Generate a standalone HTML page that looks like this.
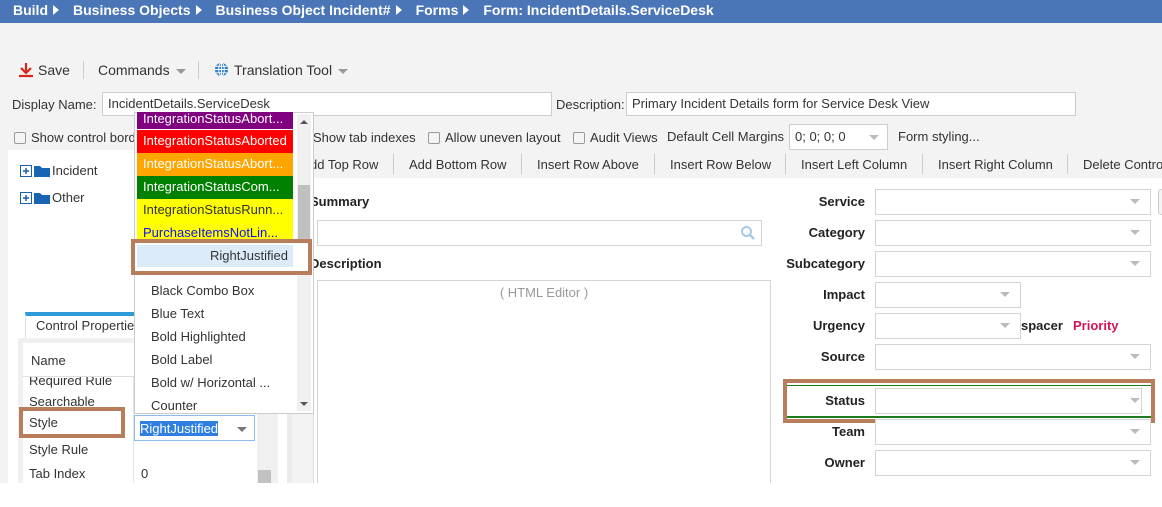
<!DOCTYPE html>
<html><head><meta charset="utf-8"><style>
*{box-sizing:border-box;margin:0;padding:0}
body{width:1162px;height:507px;overflow:hidden;background:#fff;font-family:"Liberation Sans",Arial,sans-serif;font-size:13px;color:#333;position:relative}
.a{position:absolute;white-space:nowrap}
.top{left:0;top:0;width:1162px;height:23px;background:#4a76b8;color:#fff;font-weight:bold;font-size:14px;line-height:21px;padding-left:13px}
.top span{margin-right:14px}
.tri{display:inline-block;width:0;height:0;border-left:6px solid #fff;border-top:5px solid transparent;border-bottom:5px solid transparent;margin-left:5px}
.inp{background:#fff;border:1px solid #ccc;height:24px;line-height:22px;padding-left:5px}
.cb{display:inline-block;width:12px;height:12px;border:1px solid #999;border-radius:2px;background:#f4f4f4;vertical-align:-2px;margin-right:5px}
.sep{width:1px;height:18px;background:#ccc}
.dd{width:0;height:0;border-top:5px solid #bbb;border-left:5px solid transparent;border-right:5px solid transparent}
.idd{display:inline-block;width:0;height:0;border-top:5px solid #999;border-left:5px solid transparent;border-right:5px solid transparent;margin-left:6px;vertical-align:1px}
.lbl{font-weight:bold;text-align:right;width:80px;color:#222}
.sel{background:#fff;border:1px solid #d4d4d4;height:26px}
.it{left:137px;width:156px;height:23px;line-height:21px;padding-left:6px;font-size:13px}
</style></head><body>
<div class="a" style="left:0;top:23px;width:1162px;height:460px;background:#f3f3f3"></div>
<div class="a top"><span>Build<i class="tri"></i></span><span>Business Objects<i class="tri"></i></span><span>Business Object Incident#<i class="tri"></i></span><span>Forms<i class="tri"></i></span><span>Form: IncidentDetails.ServiceDesk</span></div>

<svg class="a" style="left:18px;top:62px" width="16" height="16" viewBox="0 0 16 16"><path d="M8 1v10M3 6l5 5 5-5" stroke="#d9251c" stroke-width="2.2" fill="none"/><path d="M1 14h14" stroke="#d9251c" stroke-width="2.2"/></svg>
<div class="a" style="left:38px;top:62px;font-size:14px">Save</div>
<div class="a sep" style="left:83px;top:61px"></div>
<div class="a" style="left:98px;top:62px;font-size:14px">Commands<i class="idd"></i></div>
<div class="a sep" style="left:198px;top:61px"></div>
<svg class="a" style="left:214px;top:62px" width="15" height="15" viewBox="0 0 16 16"><circle cx="8" cy="8" r="7" fill="#2c7fc8"/><g stroke="#fff" stroke-width="1" fill="none"><ellipse cx="8" cy="8" rx="3" ry="7"/><path d="M1 8h14M2 4.5h12M2 11.5h12M8 1v14"/></g></svg>
<div class="a" style="left:234px;top:62px;font-size:14px">Translation Tool<i class="idd"></i></div>

<div class="a" style="left:12px;top:97px">Display Name:</div>
<div class="a inp" style="left:102px;top:92px;width:450px">IncidentDetails.ServiceDesk</div>
<div class="a" style="left:556px;top:97px">Description:</div>
<div class="a inp" style="left:626px;top:92px;width:450px">Primary Incident Details form for Service Desk View</div>

<div class="a" style="left:14px;top:130px"><i class="cb"></i>Show control bord</div>
<div class="a" style="left:313px;top:130px">Show tab indexes</div>
<div class="a" style="left:428px;top:130px"><i class="cb"></i>Allow uneven layout</div>
<div class="a" style="left:573px;top:130px"><i class="cb"></i>Audit Views</div>
<div class="a" style="left:667px;top:129px">Default Cell Margins</div>
<div class="a inp" style="left:789px;top:124px;width:99px;height:26px;line-height:24px">0; 0; 0; 0</div>
<div class="a dd" style="left:869px;top:135px"></div>
<div class="a" style="left:898px;top:129px">Form styling...</div>

<div class="a" style="left:8px;top:150px;width:279px;height:333px;background:#fff"></div>
<div class="a" style="left:20px;top:163px"><svg width="32" height="15"><rect x="0.5" y="2.5" width="11" height="11" fill="#fff" stroke="#1a5fa8"/><path d="M3 8h6M6 5v6" stroke="#1a5fa8" stroke-width="1.5"/><path d="M14 3h6l2 2h8v9H14z" fill="#1a64b4"/></svg></div>
<div class="a" style="left:52px;top:163px">Incident</div>
<div class="a" style="left:20px;top:190px"><svg width="32" height="15"><rect x="0.5" y="2.5" width="11" height="11" fill="#fff" stroke="#1a5fa8"/><path d="M3 8h6M6 5v6" stroke="#1a5fa8" stroke-width="1.5"/><path d="M14 3h6l2 2h8v9H14z" fill="#1a64b4"/></svg></div>
<div class="a" style="left:52px;top:190px">Other</div>

<div class="a" style="left:25px;top:312px;width:115px;height:27px;background:#fff;border:1px solid #ddd;border-top:4px solid #2e9ad8;padding:2px 0 0 10px">Control Propertie</div>
<div class="a" style="left:18px;top:338px;width:260px;height:145px;background:#f0f0f0"></div>
<div class="a" style="left:23px;top:377px;width:110px;height:106px;background:#fff"></div>
<div class="a" style="left:133px;top:377px;width:124px;height:106px;background:#fff;border-left:1px solid #e4e4e4"></div>
<div class="a" style="left:29px;top:373px">Required Rule</div>
<div class="a" style="left:23px;top:343px;width:115px;height:34px;background:#fff;border-bottom:1px solid #ddd;padding:10px 0 0 8px">Name</div>
<div class="a" style="left:29px;top:394px">Searchable</div>
<div class="a" style="left:19px;top:407px;width:106px;height:31px;border:4px solid #b87d5a;background:#fff;padding:4px 0 0 6px">Style</div>
<div class="a" style="left:29px;top:442px">Style Rule</div>
<div class="a" style="left:29px;top:466px">Tab Index</div>
<div class="a" style="left:141px;top:466px">0</div>
<div class="a" style="left:134px;top:415px;width:121px;height:26px;background:#fff;border:1px solid #8bbcef"></div>
<div class="a" style="left:140px;top:421px;background:#2f7fe0;color:#fff;line-height:15px">RightJustified</div>
<div class="a dd" style="left:237px;top:427px;border-top-color:#777"></div>
<div class="a" style="left:258px;top:470px;width:13px;height:13px;background:#c2c2c2"></div>
<div class="a" style="left:287px;top:150px;width:5px;height:333px;background:#ececec"></div>

<div class="a" style="left:292px;top:150px;width:870px;height:28px;background:#f3f3f3"></div>
<div class="a" style="left:310px;top:157px">dd Top Row</div>
<div class="a" style="left:393px;top:154px;width:1px;height:20px;background:#ccc"></div>
<div class="a" style="left:409px;top:157px">Add Bottom Row</div>
<div class="a" style="left:521px;top:154px;width:1px;height:20px;background:#ccc"></div>
<div class="a" style="left:537px;top:157px">Insert Row Above</div>
<div class="a" style="left:654px;top:154px;width:1px;height:20px;background:#ccc"></div>
<div class="a" style="left:670px;top:157px">Insert Row Below</div>
<div class="a" style="left:785px;top:154px;width:1px;height:20px;background:#ccc"></div>
<div class="a" style="left:801px;top:157px">Insert Left Column</div>
<div class="a" style="left:922px;top:154px;width:1px;height:20px;background:#ccc"></div>
<div class="a" style="left:938px;top:157px">Insert Right Column</div>
<div class="a" style="left:1067px;top:154px;width:1px;height:20px;background:#ccc"></div>
<div class="a" style="left:1083px;top:157px">Delete Contro</div>

<div class="a" style="left:313px;top:178px;width:849px;height:305px;background:#fff;border-left:1px solid #e0e0e0"></div>
<div class="a" style="left:310px;top:194px;font-weight:bold;color:#222">Summary</div>
<div class="a" style="left:317px;top:220px;width:445px;height:26px;background:#fff;border:1px solid #d4d4d4"></div>
<svg class="a" style="left:740px;top:225px" width="16" height="16" viewBox="0 0 16 16"><circle cx="6.5" cy="6.5" r="4.5" stroke="#a8c8e4" stroke-width="2" fill="none"/><path d="M10 10l4 4" stroke="#a8c8e4" stroke-width="2.5"/></svg>
<div class="a" style="left:310px;top:256px;font-weight:bold;color:#222">Description</div>
<div class="a" style="left:317px;top:280px;width:454px;height:210px;border:1px solid #d4d4d4;text-align:center;color:#999;padding-top:4px">( HTML Editor )</div>

<div class="a" style="left:783px;top:379px;width:372px;height:44px;border:4px solid #b87d5a"></div>
<div class="a" style="left:787px;top:385px;width:364px;height:33px;border-top:1px solid #1d7a1d;border-bottom:2px solid #1d7a1d"></div>

<div class="a lbl" style="left:785px;top:194px">Service</div>
<div class="a sel" style="left:875px;top:189px;width:276px"></div><div class="a dd" style="left:1130px;top:199px"></div>
<div class="a" style="left:1158px;top:189px;width:6px;height:26px;border:1px solid #ccc;border-radius:3px;background:#f4f4f4"></div>
<div class="a lbl" style="left:785px;top:225px">Category</div>
<div class="a sel" style="left:875px;top:220px;width:276px"></div><div class="a dd" style="left:1130px;top:230px"></div>
<div class="a lbl" style="left:785px;top:256px">Subcategory</div>
<div class="a sel" style="left:875px;top:251px;width:276px"></div><div class="a dd" style="left:1130px;top:261px"></div>
<div class="a lbl" style="left:785px;top:287px">Impact</div>
<div class="a sel" style="left:875px;top:282px;width:146px"></div><div class="a dd" style="left:1000px;top:292px"></div>
<div class="a lbl" style="left:785px;top:318px">Urgency</div>
<div class="a sel" style="left:875px;top:313px;width:146px"></div><div class="a dd" style="left:1000px;top:323px"></div>
<div class="a" style="left:1021px;top:318px;font-weight:bold;color:#222">spacer</div>
<div class="a" style="left:1073px;top:318px;font-weight:bold;color:#d4145a">Priority</div>
<div class="a lbl" style="left:785px;top:349px">Source</div>
<div class="a sel" style="left:875px;top:344px;width:276px"></div><div class="a dd" style="left:1130px;top:354px"></div>
<div class="a lbl" style="left:785px;top:393px">Status</div>
<div class="a sel" style="left:875px;top:388px;width:267px"></div><div class="a dd" style="left:1130px;top:398px"></div>
<div class="a lbl" style="left:785px;top:424px">Team</div>
<div class="a sel" style="left:875px;top:419px;width:276px"></div><div class="a dd" style="left:1130px;top:429px"></div>
<div class="a lbl" style="left:785px;top:455px">Owner</div>
<div class="a sel" style="left:875px;top:450px;width:276px"></div><div class="a dd" style="left:1130px;top:460px"></div>
<div class="a" style="left:0;top:483px;width:1162px;height:24px;background:#fff"></div>

<!-- dropdown -->
<div class="a" style="left:134px;top:112px;width:180px;height:302px;background:#fff;border:1px solid #ccc"></div>
<div class="a" style="left:297px;top:114px;width:14px;height:297px;background:#f0f0f0"></div>
<div class="a" style="left:300px;top:120px;width:0;height:0;border-bottom:4px solid #555;border-left:4px solid transparent;border-right:4px solid transparent"></div>
<div class="a" style="left:300px;top:402px;width:0;height:0;border-top:4px solid #555;border-left:4px solid transparent;border-right:4px solid transparent"></div>
<div class="a" style="left:298px;top:185px;width:12px;height:85px;background:#c0c0c0"></div>
<div class="a it" style="top:112px;height:17px;line-height:13px;background:#800080;color:#fff;overflow:hidden">IntegrationStatusAbort...</div>
<div class="a it" style="top:130px;background:#ff0000;color:#fff">IntegrationStatusAborted</div>
<div class="a it" style="top:153px;background:#ffa500;color:#fff">IntegrationStatusAbort...</div>
<div class="a it" style="top:176px;background:#008000;color:#fff">IntegrationStatusCom...</div>
<div class="a it" style="top:199px;background:#ffff00;color:#333">IntegrationStatusRunn...</div>
<div class="a it" style="top:222px;background:#ffff00;color:#1010ff">PurchaseItemsNotLin...</div>
<div class="a" style="left:131px;top:239px;width:181px;height:36px;border:4px solid #b87d5a;background:#fff"></div>
<div class="a" style="left:137px;top:245px;width:156px;height:22px;background:#dcebfa;text-align:right;padding-right:5px;line-height:22px">RightJustified</div>
<div class="a" style="left:151px;top:283px">Black Combo Box</div>
<div class="a" style="left:151px;top:306px">Blue Text</div>
<div class="a" style="left:151px;top:329px">Bold Highlighted</div>
<div class="a" style="left:151px;top:352px">Bold Label</div>
<div class="a" style="left:151px;top:375px">Bold w/ Horizontal ...</div>
<div class="a" style="left:151px;top:398px">Counter</div>
</body></html>
